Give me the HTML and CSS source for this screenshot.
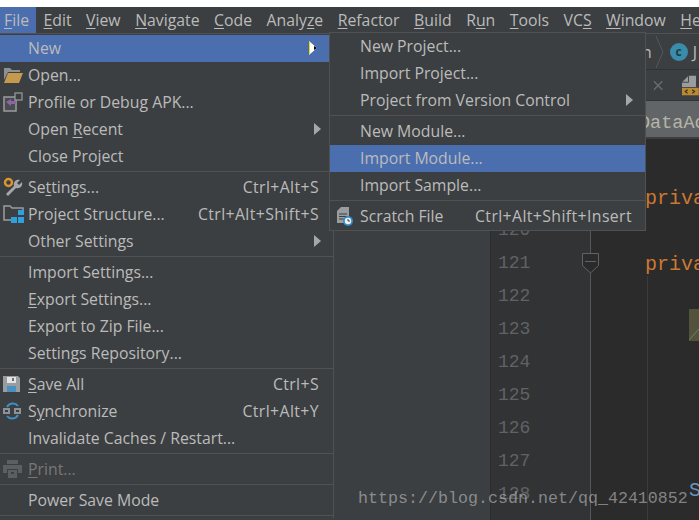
FILE: index.html
```html
<!DOCTYPE html>
<html lang="en">
<head>
<meta charset="utf-8">
<title>File menu</title>
<link rel="stylesheet" href="styles.css">
</head>
<body>
<div class="ide">
  <nav class="menubar">
    <span class="top active"><u>F</u>ile</span>
    <span class="top"><u>E</u>dit</span>
    <span class="top"><u>V</u>iew</span>
    <span class="top"><u>N</u>avigate</span>
    <span class="top"><u>C</u>ode</span>
    <span class="top">Analy<u>z</u>e</span>
    <span class="top"><u>R</u>efactor</span>
    <span class="top"><u>B</u>uild</span>
    <span class="top">R<u>u</u>n</span>
    <span class="top"><u>T</u>ools</span>
    <span class="top">VC<u>S</u></span>
    <span class="top"><u>W</u>indow</span>
    <span class="top"><u>H</u>elp</span>
  </nav>
  <div class="workspace">
    <aside class="sidebar"></aside>
    <section class="main">
      <div class="navbar">
        <span class="crumb">n</span>
        <svg class="chevron" width="9" height="36" viewBox="0 0 9 36"><path d="M1 2 8 18 1 34" fill="none" stroke="#55585a"/></svg>
        <span class="class-icon">c</span>
        <span class="crumb">J</span>
      </div>
      <div class="tabs">
        <svg class="close" width="11" height="11" viewBox="0 0 11 11"><path d="M1 1 10 10M10 1 1 10" stroke="#6b6e70" stroke-width="1.4"/></svg>
        <svg class="xml" width="18" height="21" viewBox="0 0 18 21"><path d="M7 0H15V12H0V7Z" fill="#9a9d9f"/><path d="M7 0V7H0" fill="none" stroke="#3c3f41"/><rect y="13" width="18" height="8" fill="#b98a2f"/><path d="M6 15 3.500 17 6 19M11 15 13.500 17 11 19" fill="none" stroke="#2b2b2b" stroke-width="1.200"/></svg>
      </div>
      <div class="sticky">DataAc</div>
      <div class="code">
        <div class="gutter">
          <div class="num">119</div>
          <div class="num">120</div>
          <div class="num">121</div>
          <div class="num">122</div>
          <div class="num">123</div>
          <div class="num">124</div>
          <div class="num">125</div>
          <div class="num">126</div>
          <div class="num">127</div>
          <div class="num">128</div>
          <div class="num">129</div>
          <svg class="fold" width="17" height="21" viewBox="0 0 17 21"><path d="M.5.5H16.500V12.500L8.500 20 .5 12.500Z" fill="#2b2b2b" stroke="#606366"/><path d="M3 8.500H14" stroke="#606366"/></svg>
        </div>
        <div class="editor">
          <div class="guide"></div>
          <div class="line keyword">private</div>
          <div class="line"></div>
          <div class="line keyword">private</div>
          <div class="line"></div>
          <div class="line"><span class="mark"><svg width="10" height="32" viewBox="0 0 10 32"><path d="M0 31 10 20" stroke="#6a8759"/></svg></span></div>
          <div class="line"></div>
          <div class="line"></div>
          <div class="line"></div>
          <div class="line"></div>
          <div class="line type">String</div>
        </div>
      </div>
    </section>
  </div>

  <div class="menu file-menu">
    <div class="item selected"><span class="slot"></span><span>New</span>
      <svg class="arrow" width="8" height="14" viewBox="0 0 8 14"><path d="M0 0 8 7 0 14Z" fill="#fff"/><path d="M.5 1V13" stroke="#e8e000"/><path d="M5 5 8 7 5 9" fill="#000"/></svg>
    </div>
    <div class="item"><span class="slot">
      <svg width="20" height="16" viewBox="0 0 20 16"><path d="M1 13V1H7L9 3H17V5H5Z" fill="#8c9196"/><path d="M5 6H20L16 16H1Z" fill="#c59a4f"/></svg>
    </span><span>Open...</span></div>
    <div class="item"><span class="slot">
      <svg width="20" height="20" viewBox="0 0 20 20"><rect x="1" y="5" width="12" height="14" fill="#4a4d4f" stroke="#9a9d9f" stroke-width="1.500"/><rect x="12" y="1" width="7" height="7" fill="#3c3f41" stroke="#9a9d9f" stroke-width="1.200"/><path d="M3 10 8 7V9H13V12H8V14Z" fill="#8f63a8"/></svg>
    </span><span>Profile or Debug APK...</span></div>
    <div class="item"><span class="slot"></span><span>Open <u>R</u>ecent</span>
      <svg class="arrow" width="8" height="12" viewBox="0 0 8 12"><path d="M1 0 8 6 1 12Z" fill="#a5a8aa"/></svg>
    </div>
    <div class="item"><span class="slot"></span><span>Close Project</span></div>
    <div class="sep"></div>
    <div class="item"><span class="slot">
      <svg width="20" height="20" viewBox="0 0 20 20"><path d="M5 19 3 17 11 9C10 5 13 2 17 3L14 6 16 8 19 5C20 9 17 12 13 11Z" fill="#a5a8aa"/><circle cx="5.500" cy="5.500" r="3.500" fill="#3c3f41" stroke="#d9952f" stroke-width="2.500"/></svg>
    </span><span>Se<u>t</u>tings...</span><span class="key">Ctrl+Alt+S</span></div>
    <div class="item"><span class="slot">
      <svg width="21" height="18" viewBox="0 0 21 18"><path d="M8 15H1V1H7L9 3H20V6" fill="none" stroke="#9a9d9f" stroke-width="1.500"/><path d="M15 5H21V10H15ZM8 12H14V18H8ZM15 12H21V18H15Z" fill="#2f9fe0"/></svg>
    </span><span>Project Structure...</span><span class="key">Ctrl+Alt+Shift+S</span></div>
    <div class="item"><span class="slot"></span><span>Other Settings</span>
      <svg class="arrow" width="8" height="12" viewBox="0 0 8 12"><path d="M1 0 8 6 1 12Z" fill="#a5a8aa"/></svg>
    </div>
    <div class="sep"></div>
    <div class="item"><span class="slot"></span><span>Import Settings...</span></div>
    <div class="item"><span class="slot"></span><span><u>E</u>xport Settings...</span></div>
    <div class="item"><span class="slot"></span><span>Export to Zip File...</span></div>
    <div class="item"><span class="slot"></span><span>Settings Repository...</span></div>
    <div class="sep"></div>
    <div class="item"><span class="slot">
      <svg width="17" height="16" viewBox="0 0 17 16"><path d="M0 0H15L17 2V16H0Z" fill="#9a9d9f"/><rect x="4" y="1" width="9" height="6" fill="#e4e4e4"/><rect x="9" y="2" width="2" height="3" fill="#6b6e70"/><rect x="4" y="10" width="9" height="6" fill="#4a90c0"/></svg>
    </span><span><u>S</u>ave All</span><span class="key">Ctrl+S</span></div>
    <div class="item"><span class="slot">
      <svg width="19" height="18" viewBox="0 0 19 18"><path d="M4 5C6 1 12 0 15 4M15 13C13 17 7 18 4 14" fill="none" stroke="#3d8fc4" stroke-width="2"/><path d="M0 6H7V12H0ZM11 6H18V12H11Z" fill="#8c9196"/><path d="M2 8H5V10H2ZM13 8H16V10H13Z" fill="#3c3f41"/></svg>
    </span><span>S<u>y</u>nchronize</span><span class="key">Ctrl+Alt+Y</span></div>
    <div class="item"><span class="slot"></span><span>Invalidate Caches / Restart...</span></div>
    <div class="sep"></div>
    <div class="item disabled"><span class="slot">
      <svg width="19" height="18" viewBox="0 0 19 18"><path d="M4 0H15V4H4ZM0 5H19V13H15V9H4V13H0ZM5 10H14V18H5Z" fill="#5c5f61"/><rect x="8" y="12" width="3" height="2" fill="#3c3f41"/></svg>
    </span><span><u>P</u>rint...</span></div>
    <div class="sep"></div>
    <div class="item"><span class="slot"></span><span>Power Save Mode</span></div>
    <div class="sep"></div>
  </div>

  <div class="menu new-menu">
    <div class="item"><span class="slot"></span><span>New Project...</span></div>
    <div class="item"><span class="slot"></span><span>Import Project...</span></div>
    <div class="item"><span class="slot"></span><span>Project from Version Control</span>
      <svg class="arrow" width="8" height="12" viewBox="0 0 8 12"><path d="M1 0 8 6 1 12Z" fill="#a5a8aa"/></svg>
    </div>
    <div class="sep"></div>
    <div class="item"><span class="slot"></span><span>New Module...</span></div>
    <div class="item selected"><span class="slot"></span><span>Import Module...</span></div>
    <div class="item"><span class="slot"></span><span>Import Sample...</span></div>
    <div class="sep"></div>
    <div class="item"><span class="slot">
      <svg width="17" height="20" viewBox="0 0 17 20"><path d="M5 1H13V13H1V5Z" fill="#9a9d9f"/><path d="M1 6H13V17H1Z" fill="#9a9d9f"/><path d="M3 8H11M3 10.500H11M3 13H9" stroke="#3c3f41"/><circle cx="12" cy="15" r="5" fill="#2f8fd0"/><circle cx="12" cy="15" r="3.200" fill="#f0f0f0"/><path d="M12 13V15H14" fill="none" stroke="#3c3f41"/></svg>
    </span><span>Scratch File</span><span class="key">Ctrl+Alt+Shift+Insert</span></div>
  </div>

  <div class="watermark">https://blog.csdn.net/qq_42410852</div>
</div>
</body>
</html>
```
FILE: styles.css
```css
* { box-sizing: border-box; }
html, body { margin: 0; padding: 0; background: #fff; }
.ide {
  position: relative;
  width: 699px;
  height: 520px;
  padding-top: 7px;
  overflow: hidden;
  display: flex;
  flex-direction: column;
  font-family: "Open Sans", "Noto Sans", sans-serif;
  font-size: 15.8px;
  color: #bbb;
}
u { text-underline-offset: 2px; text-decoration-thickness: 1px; }

.menubar {
  height: 27px;
  flex: none;
  display: flex;
  align-items: center;
  background: #3c3f41;
  border-bottom: 1px solid #515151;
  white-space: nowrap;
}
.top { height: 26px; padding: 0 7.25px; line-height: 26px; }
.top:first-child { padding: 0 7.25px 0 4px; }
.top.active { background: #4b6eaf; }

.workspace { flex: 1; display: flex; min-height: 0; }
.sidebar { width: 490px; flex: none; background: #3c3f41; }
.main { flex: 1; min-width: 0; display: flex; flex-direction: column; background: #2b2b2b; }

.navbar {
  height: 36px;
  flex: none;
  display: flex;
  align-items: center;
  padding-left: 152px;
  background: #3c3f41;
  border-bottom: 1px solid #323232;
}
.crumb { color: #bbb; }
.chevron { margin: 0 6px 0 3px; }
.class-icon {
  width: 18px;
  height: 18px;
  margin-right: 5px;
  border-radius: 50%;
  background: #3a8cab;
  color: #1f3b47;
  font-weight: 700;
  font-size: 12px;
  line-height: 17px;
  text-align: center;
}
.tabs {
  height: 31px;
  flex: none;
  display: flex;
  align-items: center;
  padding-left: 163px;
  background: #3c3f41;
  border-bottom: 1px solid #323232;
}
.close { margin-right: 19px; }
.sticky {
  height: 40px;
  flex: none;
  padding: 6px 0 0 149px;
  font: 18.5px/33px "Liberation Mono", monospace;
  color: #b5b5a8;
  background: linear-gradient(#626567 0 36px, #3c3f41 36px 38px, #2b2b2b 38px);
}

.code { flex: 1; min-height: 0; display: flex; overflow: hidden; }
.gutter {
  position: relative;
  width: 101px;
  flex: none;
  padding: 40px 0 0 7px;
  background: #313335;
  border-left: 1px solid #2b2b2b;
  border-right: 1px solid #55585a;
  font: 18px/33px "Liberation Mono", monospace;
  color: #606366;
}
.num { height: 33px; }
.fold { position: absolute; left: 91px; top: 112px; }
.editor {
  position: relative;
  flex: 1;
  min-width: 0;
  padding: 39px 0 0 54px;
  font: 20px/33px "Liberation Mono", monospace;
  white-space: nowrap;
}
.guide { position: absolute; left: 56px; top: 135px; bottom: 0; width: 1px; background: #3b3b3b; }
.line { height: 33px; }
.keyword { color: #cc7832; padding-top: 2px; }
.type { color: #6897bb; padding-left: 44px; }
.line .mark { display: block; margin: -3px 0 0 44px; height: 32px; background: #53533d; }
.mark svg { display: block; }

.menu {
  position: absolute;
  background: #3c3f41;
  white-space: nowrap;
}
.file-menu {
  left: 0;
  top: 35px;
  width: 334px;
  border-right: 1px solid #515151;
}
.new-menu {
  left: 329px;
  top: 32px;
  width: 317px;
  border: 1px solid #515151;
}
.item {
  height: 27px;
  padding-bottom: 2px;
  display: flex;
  align-items: center;
}
.slot { width: 28px; flex: none; display: flex; align-items: center; padding-left: 3px; }
.new-menu .slot { width: 30px; padding-left: 6px; }
.item.selected { background: #4b6eaf; }
.file-menu .item.selected { margin-right: 4px; }
.item.disabled { color: #777; }
.key { margin-left: auto; padding-right: 14px; letter-spacing: .4px; }
.new-menu .key { padding-right: 13px; }
.arrow { margin-left: auto; margin-right: 12px; }
.sep { height: 4px; padding-top: 1px; }
.sep::before { content: ""; display: block; height: 1px; background: #515151; }
.watermark {
  position: absolute;
  left: 358px;
  top: 489px;
  font: 16.67px/20px "Liberation Mono", monospace;
  color: rgba(190, 190, 190, 0.62);
}
```
